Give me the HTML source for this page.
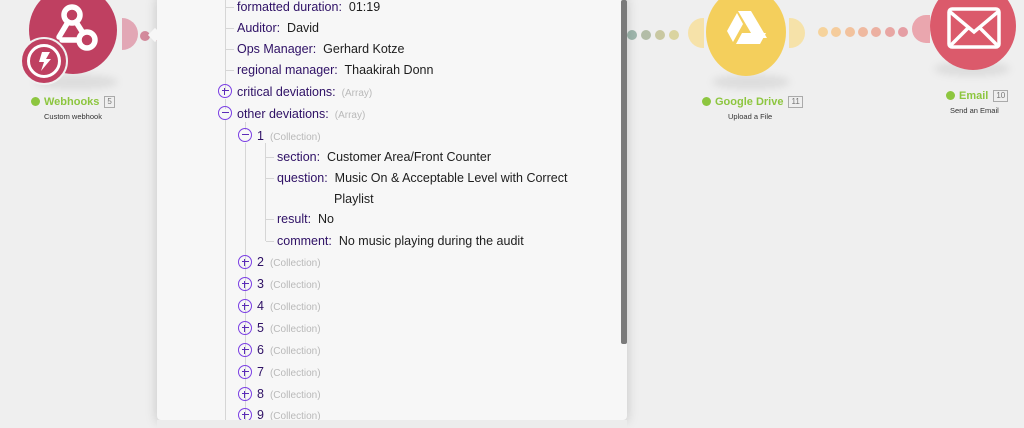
<!DOCTYPE html>
<html><head><meta charset="utf-8"><style>
body{margin:0;width:1024px;height:428px;background:#efefef;position:relative;overflow:hidden;font-family:"Liberation Sans",sans-serif}
.a{position:absolute}
.panel{left:157px;top:-5px;width:470px;height:425px;background:#f7f7f7;border-radius:4px;box-shadow:0 2px 12px rgba(0,0,0,.18)}
.r{position:absolute;font-size:12.5px;color:#1d1d1d;white-space:nowrap;line-height:16px}
.k{color:#2e1065}
.g{color:#b9b9b9;font-size:10px;margin-left:6px}
.vl{position:absolute;width:1px;background:#d6d6d6}
.hl{position:absolute;height:1px;width:8px;background:#d6d6d6}
.c{position:absolute;border:1.4px solid #7b3fe4;border-radius:50%;box-sizing:border-box;width:14px;height:14px}
.c:before{content:"";position:absolute;left:2.5px;right:2.5px;top:5px;height:1.4px;background:#5b2bb8}
.c.p:after{content:"";position:absolute;top:2.5px;bottom:2.5px;left:5px;width:1.4px;background:#5b2bb8}
.dot{position:absolute;width:10px;height:10px;border-radius:50%}
.lbl{position:absolute;font-size:11px;font-weight:bold;color:#8dc63f;white-space:nowrap}
.sub{position:absolute;font-size:7.5px;color:#333;white-space:nowrap}
.num{display:inline-block;border:1px solid #aaa;color:#777;font-size:8px;font-weight:normal;padding:0 2px;margin-left:5px;line-height:10px;vertical-align:1px}
.ck{display:inline-block;width:9px;height:9px;border-radius:50%;background:#8dc63f;margin-right:4px;vertical-align:-1px}
</style></head><body>
<!-- webhook -->
<div class="a" style="left:122px;top:18px;width:16px;height:32px;border-radius:0 16px 16px 0;background:#e2a7b5"></div>
<div class="dot" style="left:140px;top:31px;background:#d38a9c"></div>
<div class="dot" style="left:152px;top:31px;background:#d8a2af"></div>
<div class="a" style="left:34px;top:75px;width:84px;height:14px;border-radius:50%;background:rgba(0,0,0,.08);filter:blur(4px)"></div>
<div class="a" style="left:29px;top:-14px;width:88px;height:88px;border-radius:50%;background:#bf4061"></div>
<svg class="a" style="left:46px;top:0" width="56" height="56" viewBox="0 0 56 56" fill="none" stroke="#fff" stroke-width="5.5" stroke-linecap="round"><circle cx="26" cy="15" r="8"/><path d="M22 22 L13 37 M32 40 h-16"/><circle cx="41" cy="40" r="8" /><path d="M30 22 L37 33"/></svg>
<div class="a" style="left:20px;top:37px;width:44px;height:44px;border-radius:50%;background:#bf4061;border:2px solid #f0f0f0"></div>
<div class="a" style="left:27px;top:44px;width:34px;height:34px;border-radius:50%;border:3px solid #fff;box-sizing:border-box;background:#bf4061"></div>
<svg class="a" style="left:33px;top:50px" width="22" height="22" viewBox="0 0 22 22"><path d="M9 2 h8 l-4 7 h5 l-10 12 l3-9 h-5 z" fill="#fff"/></svg>
<div class="lbl" style="left:31px;top:96px"><span class="ck"></span>Webhooks<span class="num">5</span></div>
<div class="sub" style="left:44px;top:112px">Custom webhook</div>
<!-- dots middle -->
<div class="dot" style="left:627px;top:30px;background:#9fb7ad"></div>
<div class="dot" style="left:641px;top:30px;background:#b3bda7"></div>
<div class="dot" style="left:655px;top:30px;background:#c9c8a1"></div>
<div class="dot" style="left:669px;top:30px;background:#dad4a0"></div>
<div class="a" style="left:688px;top:18px;width:16px;height:30px;border-radius:16px 0 0 16px;background:#f6e2a9"></div>
<div class="a" style="left:789px;top:18px;width:16px;height:30px;border-radius:0 16px 16px 0;background:#f6e2a9"></div>
<div class="a" style="left:712px;top:75px;width:78px;height:14px;border-radius:50%;background:rgba(0,0,0,.08);filter:blur(4px)"></div>
<div class="a" style="left:706px;top:-12px;width:80px;height:88px;border-radius:50%;background:#f4cf5c"></div>
<svg class="a" style="left:724px;top:8px" width="44" height="46" viewBox="0 0 44 46" fill="#fff"><path d="M14 3 h13 l16 27 h-13 z"/><path d="M13 5 l6 11 l-10 18 l-6-11 z"/><path d="M12 36 l6-11 h24 l-6 11 z"/></svg>
<div class="lbl" style="left:702px;top:96px"><span class="ck"></span>Google Drive<span class="num">11</span></div>
<div class="sub" style="left:728px;top:112px">Upload a File</div>
<div class="dot" style="left:818px;top:27px;background:#f6d39c"></div>
<div class="dot" style="left:831px;top:27px;background:#f5cc9c"></div>
<div class="dot" style="left:845px;top:27px;background:#f2c29d"></div>
<div class="dot" style="left:858px;top:27px;background:#efb9a0"></div>
<div class="dot" style="left:871px;top:27px;background:#ecb0a1"></div>
<div class="dot" style="left:885px;top:27px;background:#e8a6a3"></div>
<div class="dot" style="left:898px;top:27px;background:#e59ea4"></div>
<div class="a" style="left:912px;top:15px;width:18px;height:28px;border-radius:16px 0 0 16px;background:#eaa6ae"></div>
<div class="a" style="left:934px;top:62px;width:76px;height:14px;border-radius:50%;background:rgba(0,0,0,.08);filter:blur(4px)"></div>
<div class="a" style="left:930px;top:-18px;width:86px;height:88px;border-radius:50%;background:#db5a6b"></div>
<svg class="a" style="left:946px;top:6px" width="56" height="44" viewBox="0 0 56 44" fill="none" stroke="#fff" stroke-width="3.5"><rect x="3" y="3" width="50" height="38" rx="3"/><path d="M3 5 L28 26 L53 5 M3 41 L22 22 M53 41 L34 22"/></svg>
<div class="lbl" style="left:946px;top:90px"><span class="ck"></span>Email<span class="num">10</span></div>
<div class="sub" style="left:950px;top:106px">Send an Email</div>
<!-- panel -->
<div class="a panel"></div>
<div class="a" style="left:150px;top:30px;width:10px;height:10px;background:#f7f7f7;transform:rotate(45deg)"></div>
<div class="a" style="left:621px;top:0;width:6px;height:344px;background:#7a7a7a;border-radius:2px"></div>
<div class="vl" style="left:225px;top:0;height:90px"></div>
<div class="vl" style="left:225px;top:99px;height:10px"></div>
<div class="vl" style="left:225px;top:120px;height:308px"></div>
<div class="vl" style="left:245px;top:122px;height:8px"></div>
<div class="vl" style="left:245px;top:143px;height:285px"></div>
<div class="vl" style="left:265px;top:143px;height:98px"></div>
<div class="hl" style="left:226px;top:7px"></div><div class="hl" style="left:226px;top:28px"></div><div class="hl" style="left:226px;top:49px"></div><div class="hl" style="left:226px;top:70px"></div>
<div class="hl" style="left:266px;top:157px"></div><div class="hl" style="left:266px;top:178px"></div><div class="hl" style="left:266px;top:219px"></div><div class="hl" style="left:266px;top:241px"></div>
<div class="r" style="left:237px;top:-1px"><span class="k">formatted duration:</span>&nbsp; 01:19</div>
<div class="r" style="left:237px;top:20px"><span class="k">Auditor:</span>&nbsp; David</div>
<div class="r" style="left:237px;top:41px"><span class="k">Ops Manager:</span>&nbsp; Gerhard Kotze</div>
<div class="r" style="left:237px;top:62px"><span class="k">regional manager:</span>&nbsp; Thaakirah Donn</div>
<div class="c p" style="left:218px;top:84px"></div><div class="r" style="left:237px;top:84px"><span class="k">critical deviations:</span><span class="g">(Array)</span></div>
<div class="c" style="left:218px;top:106px"></div><div class="r" style="left:237px;top:106px"><span class="k">other deviations:</span><span class="g">(Array)</span></div>
<div class="c" style="left:238px;top:128px"></div><div class="r" style="left:257px;top:128px"><span class="k">1</span><span class="g">(Collection)</span></div>
<div class="r" style="left:277px;top:149px"><span class="k">section:</span>&nbsp; Customer Area/Front Counter</div>
<div class="r" style="left:277px;top:170px"><span class="k">question:</span>&nbsp; Music On &amp; Acceptable Level with Correct</div>
<div class="r" style="left:334px;top:191px">Playlist</div>
<div class="r" style="left:277px;top:211px"><span class="k">result:</span>&nbsp; No</div>
<div class="r" style="left:277px;top:233px"><span class="k">comment:</span>&nbsp; No music playing during the audit</div>
<div class="c p" style="left:238px;top:255px"></div><div class="r" style="left:257px;top:254px"><span class="k">2</span><span class="g">(Collection)</span></div>
<div class="c p" style="left:238px;top:277px"></div><div class="r" style="left:257px;top:276px"><span class="k">3</span><span class="g">(Collection)</span></div>
<div class="c p" style="left:238px;top:299px"></div><div class="r" style="left:257px;top:298px"><span class="k">4</span><span class="g">(Collection)</span></div>
<div class="c p" style="left:238px;top:321px"></div><div class="r" style="left:257px;top:320px"><span class="k">5</span><span class="g">(Collection)</span></div>
<div class="c p" style="left:238px;top:343px"></div><div class="r" style="left:257px;top:342px"><span class="k">6</span><span class="g">(Collection)</span></div>
<div class="c p" style="left:238px;top:365px"></div><div class="r" style="left:257px;top:364px"><span class="k">7</span><span class="g">(Collection)</span></div>
<div class="c p" style="left:238px;top:387px"></div><div class="r" style="left:257px;top:386px"><span class="k">8</span><span class="g">(Collection)</span></div>
<div class="c p" style="left:238px;top:408px"></div><div class="r" style="left:257px;top:407px"><span class="k">9</span><span class="g">(Collection)</span></div>
<div class="a" style="left:157px;top:420px;width:470px;height:8px;background:#ececec"></div>
</body></html>
